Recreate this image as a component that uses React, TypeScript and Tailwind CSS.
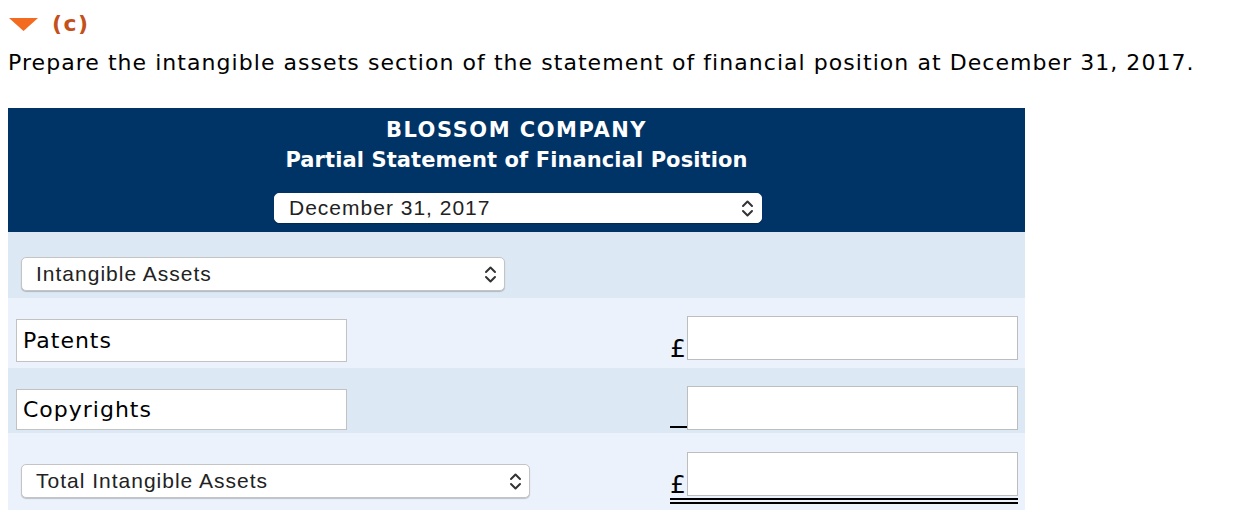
import React from "react";

const verdana = { fontFamily: '"DejaVu Sans", Verdana, sans-serif' };
const helv = { fontFamily: '"Liberation Sans", Arial, sans-serif' };

function Chevrons() {
  return (
    <svg width="13" height="19" viewBox="0 0 13 19" fill="none" stroke="#333" strokeWidth="2" strokeLinecap="round" strokeLinejoin="round">
      <path d="M2 7 L6.5 2.5 L11 7" />
      <path d="M2 12 L6.5 16.5 L11 12" />
    </svg>
  );
}

function Select({ label, className }: { label: string; className: string }) {
  return (
    <div
      className={`flex items-center justify-between rounded-[5px] border border-[#c4c4c4] bg-white pl-[14px] pr-[7px] text-[21px] tracking-[1px] text-[#222] shadow-[0_1px_1px_rgba(0,0,0,0.2)] ${className}`}
      style={helv}
    >
      <span>{label}</span>
      <Chevrons />
    </div>
  );
}

function TextBox({ value, className }: { value: string; className: string }) {
  return (
    <div
      className={`flex items-center border border-[#c2c2c2] bg-white pl-[6px] text-[22px] tracking-[1px] text-black ${className}`}
      style={verdana}
    >
      {value}
    </div>
  );
}

function Amount({ symbol, top, bottomRule }: { symbol: "£" | "_" | ""; top: string; bottomRule?: boolean }) {
  return (
    <div className={`flex flex-col ${top}`}>
      <div className="flex items-end">
        <div className="relative h-[44px] w-[17px]">
          {symbol === "£" && (
            <span className="absolute bottom-[-1px] left-0 text-[25px] leading-none text-black" style={verdana}>
              £
            </span>
          )}
          {symbol === "_" && <div className="absolute bottom-[2px] left-0 h-[2px] w-[17px] bg-black" />}
        </div>
        <div className="h-[44px] w-[331px] border border-[#bdbdbd] bg-white" />
      </div>
      {bottomRule && (
        <div className="mt-[2px] flex flex-col gap-[2px]">
          <div className="h-[2px] w-[348px] bg-black" />
          <div className="h-[2px] w-[348px] bg-black" />
        </div>
      )}
    </div>
  );
}

export default function App() {
  return (
    <div className="h-[530px] w-[1240px] overflow-hidden bg-white">
      <div className="flex items-center gap-[14px] pl-[9px] pt-[11px]">
        <svg width="29" height="13" viewBox="0 0 29 13">
          <polygon points="0,0 29,0 14.5,13" fill="#f26b21" />
        </svg>
        <span className="text-[22px] font-bold leading-[26px] tracking-[1.5px] text-[#c4501a]" style={verdana}>
          (c)
        </span>
      </div>
      <p className="mt-[10px] pl-[8px] text-[22px] leading-[32px] tracking-[1.05px] text-black" style={verdana}>
        Prepare the intangible assets section of the statement of financial position at December 31, 2017.
      </p>

      <div className="ml-[8px] mt-[29px] w-[1017px]">
        <div className="flex h-[124px] flex-col items-center bg-[#003366] pt-[7px] text-white" style={verdana}>
          <div className="text-[21px] font-bold leading-[30px] tracking-[1.5px]">BLOSSOM COMPANY</div>
          <div className="text-[21px] font-bold leading-[30px] tracking-[0.1px]">Partial Statement of Financial Position</div>
          <Select label="December 31, 2017" className="ml-[3px] mt-[18px] h-[30px] w-[488px] border-white" />
        </div>

        <div className="h-[66px] bg-[#dde8f5] pl-[13px] pt-[25px]">
          <Select label="Intangible Assets" className="h-[34px] w-[484px]" />
        </div>

        <div className="flex h-[70px] justify-between bg-[#ebf2fc] pl-[8px] pr-[7px]">
          <TextBox value="Patents" className="mt-[21px] h-[43px] w-[331px]" />
          <Amount symbol="£" top="mt-[18px]" />
        </div>

        <div className="flex h-[65px] justify-between bg-[#dde8f5] pl-[8px] pr-[7px]">
          <TextBox value="Copyrights" className="mt-[21px] h-[41px] w-[331px]" />
          <Amount symbol="_" top="mt-[18px]" />
        </div>

        <div className="flex h-[77px] justify-between bg-[#ebf2fc] pl-[13px] pr-[7px]">
          <Select label="Total Intangible Assets" className="mt-[31px] h-[34px] w-[509px]" />
          <Amount symbol="£" top="mt-[19px]" bottomRule />
        </div>
      </div>
    </div>
  );
}
